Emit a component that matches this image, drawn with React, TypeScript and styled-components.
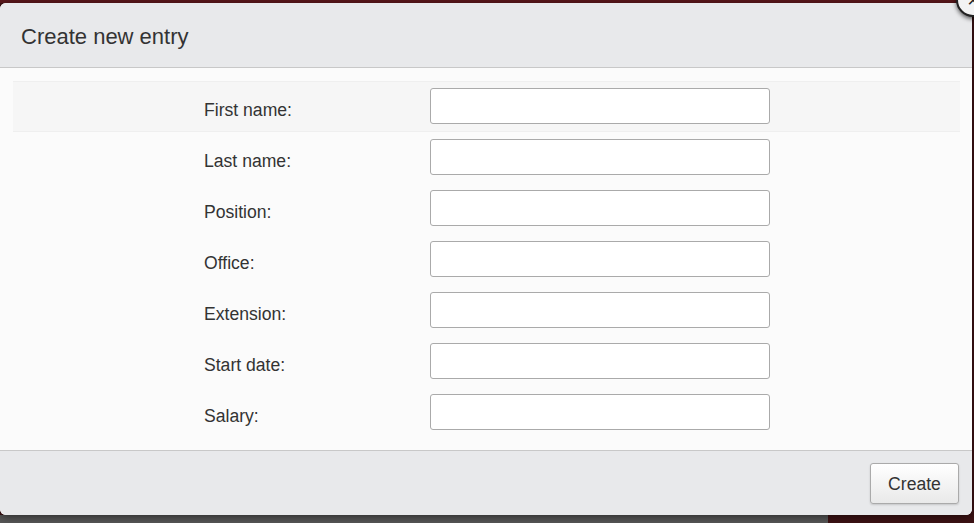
import React from "react";
import styled, {createGlobalStyle} from "styled-components";

const GlobalStyle = createGlobalStyle`
  html, body {
    margin: 0;
    padding: 0;
    background: #3d1214;
  }
  * {
    box-sizing: border-box;
  }
`

const Page = styled.div`
  width: 974px;
  height: 523px;
  overflow: hidden;
  display: flex;
  flex-direction: column;
  padding-top: 3px;
  background: linear-gradient(#5a171b 0, #5a171b 3px, #3d1214 3px);
  font-family: "Liberation Sans", Arial, sans-serif;
  color: #333;
`
const Modal = styled.div`
  position: relative;
  width: 972px;
  height: 512px;
  display: flex;
  flex-direction: column;
  border-radius: 6px;
  background: #fbfbfb;
  box-shadow: 0 2px 8px rgba(0, 0, 0, 0.5);
`
const Header = styled.div`
  height: 65px;
  display: flex;
  align-items: center;
  padding: 4px 21px 0;
  background: #e8e9eb;
  border-bottom: 1px solid #c8c8c8;
  border-radius: 6px 6px 0 0;
`
const Title = styled.h1`
  margin: 0;
  font-size: 22px;
  font-weight: normal;
  color: #333;
`
const CloseButton = styled.button`
  position: absolute;
  top: -20px;
  right: -18px;
  width: 34px;
  height: 34px;
  border-radius: 50%;
  border: 2px solid #222;
  background: #f3f3f3;
  box-shadow: 0 2px 4px rgba(0, 0, 0, 0.6);
  font-family: "Liberation Sans", Arial, sans-serif;
  font-size: 20px;
  line-height: 1;
  color: #222;
  padding: 0;
  display: flex;
  align-items: center;
  justify-content: center;
`
const Body = styled.div`
  flex: 1;
  padding: 13px 12px 0 13px;
`
const Row = styled.div<{ $active?: boolean }>`
  display: grid;
  grid-template-columns: 226px 340px;
  align-items: center;
  height: 51px;
  padding: 0 0 1px 191px;
  background: ${props => props.$active ? '#f6f6f6' : 'transparent'};
  border-top: 1px solid ${props => props.$active ? '#efefef' : 'transparent'};
  border-bottom: 1px solid ${props => props.$active ? '#efefef' : 'transparent'};
`
const Label = styled.label`
  font-size: 17.6px;
  color: #333;
  padding-top: 8px;
`
const Input = styled.input`
  width: 340px;
  height: 36px;
  border: 1px solid #aaa;
  border-radius: 3px;
  background: #fff;
  font-size: 16px;
  padding: 0 8px;
`
const Footer = styled.div`
  height: 65px;
  display: flex;
  justify-content: flex-end;
  padding: 12px 13px 0 0;
  background: #e8e9eb;
  border-top: 1px solid #c8c8c8;
  border-radius: 0 0 6px 6px;
`
const Button = styled.button`
  width: 89px;
  height: 41px;
  border: 1px solid #aaa;
  border-radius: 3px;
  background: linear-gradient(#ffffff, #e9e9e9);
  box-shadow: 0 1px 2px rgba(0, 0, 0, 0.15);
  font-family: "Liberation Sans", Arial, sans-serif;
  font-size: 17.6px;
  color: #333;
  padding-top: 2px;
`
const BottomStrip = styled.div`
  flex: 1;
  display: flex;
`
const DimmedBlock = styled.div`
  width: 828px;
  background: #575757;
`

const fields = [
    {id: 'first_name', label: 'First name:'},
    {id: 'last_name', label: 'Last name:'},
    {id: 'position', label: 'Position:'},
    {id: 'office', label: 'Office:'},
    {id: 'extension', label: 'Extension:'},
    {id: 'start_date', label: 'Start date:'},
    {id: 'salary', label: 'Salary:'},
]

export default function App() {
    return (
        <Page>
            <GlobalStyle/>
            <Modal>
                <Header>
                    <Title>Create new entry</Title>
                </Header>
                <CloseButton aria-label="Close">×</CloseButton>
                <Body>
                    {fields.map((field, idx) => (
                        <Row key={field.id} $active={idx === 0}>
                            <Label htmlFor={field.id}>{field.label}</Label>
                            <Input id={field.id} type="text"/>
                        </Row>
                    ))}
                </Body>
                <Footer>
                    <Button>Create</Button>
                </Footer>
            </Modal>
            <BottomStrip>
                <DimmedBlock/>
            </BottomStrip>
        </Page>
    )
}
